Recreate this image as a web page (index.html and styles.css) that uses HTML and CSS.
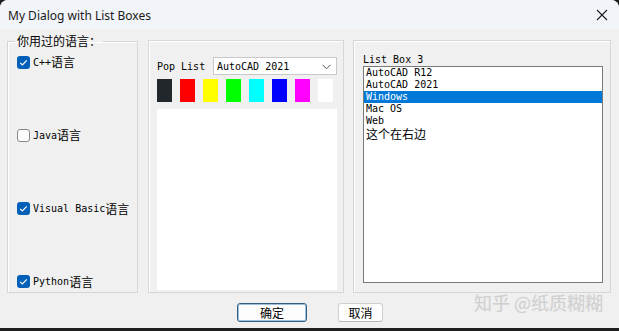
FILE: index.html
```html
<!DOCTYPE html>
<html lang="zh">
<head>
    <meta charset="UTF-8">
    <meta name="viewport" content="width=device-width, initial-scale=1.0">
    <title>My Dialog with List Boxes</title>
    <link rel="stylesheet" href="styles.css">
</head>
<body>

    <div class="window">
        <div class="titlebar">
            <span class="title">My Dialog with List Boxes</span>
            <svg class="close" width="12" height="12" viewBox="0 0 12 12">
                <path d="M1 1 L11 11 M11 1 L1 11" stroke="#1b1b1b" stroke-width="1.1" fill="none"/>
            </svg>
        </div>

        <div class="dialog">
            <div class="panels">
                <!-- 语言选择 -->
                <fieldset class="group">
                    <legend>你用过的语言：</legend>
                    <label class="check"><span class="box on"><svg width="13" height="13" viewBox="0 0 13 13"><path d="M3.2 6.8 L5.4 9 L9.8 4.4" stroke="#fff" stroke-width="1.2" fill="none"/></svg></span>C++<span class="zh">语言</span></label>
                    <label class="check"><span class="box"></span>Java<span class="zh">语言</span></label>
                    <label class="check"><span class="box on"><svg width="13" height="13" viewBox="0 0 13 13"><path d="M3.2 6.8 L5.4 9 L9.8 4.4" stroke="#fff" stroke-width="1.2" fill="none"/></svg></span>Visual Basic<span class="zh">语言</span></label>
                    <label class="check"><span class="box on"><svg width="13" height="13" viewBox="0 0 13 13"><path d="M3.2 6.8 L5.4 9 L9.8 4.4" stroke="#fff" stroke-width="1.2" fill="none"/></svg></span>Python<span class="zh">语言</span></label>
                </fieldset>

                <!-- 下拉列表和颜色 -->
                <div class="panel pop">
                    <div class="pop-row">
                        <span class="mono">Pop List</span>
                        <div class="combo">
                            <span class="mono">AutoCAD 2021</span>
                            <svg width="9" height="6" viewBox="0 0 9 6"><path d="M0.5 0.8 L4.5 4.8 L8.5 0.8" stroke="#555" stroke-width="1" fill="none"/></svg>
                        </div>
                    </div>
                    <div class="swatches">
                        <span class="sw sw-black"></span>
                        <span class="sw sw-red"></span>
                        <span class="sw sw-yellow"></span>
                        <span class="sw sw-green"></span>
                        <span class="sw sw-cyan"></span>
                        <span class="sw sw-blue"></span>
                        <span class="sw sw-magenta"></span>
                        <span class="sw sw-white"></span>
                    </div>
                    <div class="blank"></div>
                </div>

                <!-- 列表框 -->
                <div class="panel lb">
                    <div class="mono lb-title">List Box 3</div>
                    <ul class="listbox">
                        <li>AutoCAD R12</li>
                        <li>AutoCAD 2021</li>
                        <li class="selected">Windows</li>
                        <li>Mac OS</li>
                        <li>Web</li>
                        <li class="cjk">这个在右边</li>
                    </ul>
                </div>
            </div>

            <div class="buttons">
                <button class="btn default">确定</button>
                <button class="btn">取消</button>
            </div>

            <div class="watermark">知乎 @纸质糊糊</div>
        </div>
    </div>

</body>
</html>
```

FILE: styles.css
```css
body {
    margin: 0;
    background-color: #1f1f1f;
    font-family: "Liberation Mono", "Noto Sans CJK SC", monospace;
    width: 619px;
    height: 331px;
    overflow: hidden;
}
.window {
    height: 328px;
    border-radius: 8px 8px 0 0;
    overflow: hidden;
    background-color: #f0f0f0;
}
.titlebar {
    height: 29px;
    background-color: #f1f4f9;
    display: flex;
    align-items: center;
    justify-content: space-between;
    padding: 0 11px 0 8px;
}
.title {
    font-family: "Noto Sans", sans-serif;
    font-size: 12px;
    color: #1a1a1a;
    margin-top: 1px;
}
.close {
    margin-top: 1px;
}
.dialog {
    position: relative;
    height: 299px;
}
.panels {
    display: flex;
    align-items: flex-start;
    padding: 5px 0 0 7px;
}
.mono {
    font-family: "DejaVu Sans Mono", "Noto Sans CJK SC", monospace;
    font-size: 10px;
    color: #000;
}

/* 分组框 */
.group {
    margin: 0;
    width: 131px;
    height: 259px;
    box-sizing: border-box;
    border: 1px solid #d6d6d6;
    box-shadow: inset 1px 1px 0 #fff;
    padding: 7px 0 3px 9px;
    display: flex;
    flex-direction: column;
    justify-content: space-between;
}
.group legend {
    font-family: "Noto Sans CJK SC", sans-serif;
    font-size: 12px;
    line-height: 14px;
    padding: 0 2px;
    margin-left: -2px;
    color: #000;
}
.check {
    display: flex;
    align-items: center;
    height: 14px;
    font-family: "DejaVu Sans Mono", "Noto Sans CJK SC", monospace;
    font-size: 10px;
    color: #000;
}
.check .zh {
    font-family: "Noto Sans CJK SC", sans-serif;
    font-size: 12px;
    line-height: 14px;
}
.box {
    width: 13px;
    height: 13px;
    box-sizing: border-box;
    border: 1px solid #8a8a8a;
    border-radius: 3px;
    background-color: #fbfbfb;
    margin-right: 3px;
    display: flex;
}
.box.on {
    border: none;
    background-color: #005fb8;
}

/* 面板 */
.panel {
    margin-top: 6px;
    height: 253px;
    box-sizing: border-box;
    border: 1px solid #d6d6d6;
    box-shadow: inset 1px 1px 0 #fff;
    display: flex;
    flex-direction: column;
}
.pop {
    width: 196px;
    margin-left: 10px;
    padding: 16px 6px 2px 8px;
}
.pop-row {
    display: flex;
    align-items: center;
    justify-content: space-between;
}
.combo {
    width: 124px;
    height: 18px;
    box-sizing: border-box;
    border: 1px solid #c8c8c8;
    background-color: #fff;
    display: flex;
    align-items: center;
    justify-content: space-between;
    padding: 1px 5px 0 3px;
}
.swatches {
    display: flex;
    gap: 8px;
    margin-top: 4px;
    height: 23px;
}
.sw {
    width: 15px;
    height: 23px;
}
.sw-black { background-color: #22272b; }
.sw-red { background-color: #ff0000; }
.sw-yellow { background-color: #ffff00; }
.sw-green { background-color: #00ff00; }
.sw-cyan { background-color: #00ffff; }
.sw-blue { background-color: #0000ff; }
.sw-magenta { background-color: #ff00ff; }
.sw-white { background-color: #ffffff; }
.blank {
    flex: 1;
    margin-top: 7px;
    background-color: #fff;
}

/* 列表框 */
.lb {
    width: 258px;
    margin-left: 9px;
    padding: 13px 7px 9px 9px;
}
.lb-title {
    line-height: 12px;
    height: 12px;
}
.listbox {
    flex: 1;
    list-style-type: none;
    margin: 0;
    padding: 0;
    border: 1px solid #7a7a7a;
    background-color: #fff;
}
.listbox li {
    height: 12px;
    line-height: 12px;
    padding-left: 2px;
    font-family: "DejaVu Sans Mono", "Noto Sans CJK SC", monospace;
    font-size: 10px;
    color: #000;
}
.listbox li.selected {
    background-color: #0078d7;
    color: #fff;
}
.listbox li.cjk {
    font-family: "Noto Sans CJK SC", sans-serif;
    font-size: 12px;
    margin-top: 1px;
}

/* 按钮 */
.buttons {
    display: flex;
    gap: 31px;
    padding: 10px 0 0 237px;
}
.btn {
    height: 19px;
    box-sizing: border-box;
    font-family: "Noto Sans CJK SC", sans-serif;
    font-size: 12px;
    line-height: 15px;
    color: #000;
    background-color: #fdfdfd;
    border: 1px solid #d0d0d0;
    border-bottom-color: #b8b8b8;
    border-radius: 3px;
    padding: 0;
    width: 45px;
}
.btn.default {
    width: 70px;
    border: 1px solid #2f5f85;
    box-shadow: inset 0 0 0 1px #9fc0da;
}
.watermark {
    position: absolute;
    right: 16px;
    bottom: 13px;
    font-family: "Noto Sans CJK SC", sans-serif;
    font-size: 18px;
    color: #d0d0d0;
    text-shadow: 0 0 1px #e6e6e6;
}
```
